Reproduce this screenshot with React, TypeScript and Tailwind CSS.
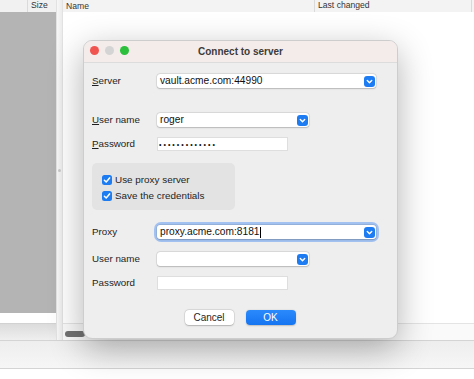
import React from "react";

const Chevron = () => (
  <span className="flex h-[11px] w-[11px] shrink-0 items-center justify-center rounded-[3px] bg-[#1d7cf2]">
    <svg width="11" height="11" viewBox="0 0 11 11" fill="none">
      <path d="M3.3 4.6 L5.5 6.8 L7.7 4.6" stroke="white" strokeWidth="1.4" strokeLinecap="round" strokeLinejoin="round" />
    </svg>
  </span>
);

const Check = () => (
  <span className="flex h-[10px] w-[10px] shrink-0 items-center justify-center rounded-[2.5px] bg-[#1d7cf2]">
    <svg width="10" height="10" viewBox="0 0 10 10" fill="none">
      <path d="M2.4 5.2 L4.2 7 L7.6 2.9" stroke="white" strokeWidth="1.5" strokeLinecap="round" strokeLinejoin="round" />
    </svg>
  </span>
);

const Combo = ({ value, width, cursor }: { value: string; width: string; cursor?: boolean }) => (
  <div
    className={`flex h-[14px] ${width} items-center justify-between rounded-[3px] bg-white pl-[3px] pr-[1px] shadow-[0_0_0_0.5px_rgba(0,0,0,0.12),0_0.5px_1.5px_rgba(0,0,0,0.18)]`}
  >
    <span className="flex items-center text-[10.2px] leading-none text-[#111]">
      {value}
      {cursor && <span className="ml-[0.5px] inline-block h-[11px] w-[1px] bg-black" />}
    </span>
    <Chevron />
  </div>
);

const Secret = ({ value }: { value: string }) => (
  <div className="flex h-[14px] w-[131px] items-center border border-[#dedede] bg-white pl-[1px]">
    <span className="text-[7px] leading-none tracking-[2px] text-[#111]">{value}</span>
  </div>
);

const Row = ({ label, children, className = "" }: { label: React.ReactNode; children: React.ReactNode; className?: string }) => (
  <div className={`flex h-[14px] items-center ${className}`}>
    <div className="w-[65px] shrink-0 text-[9.8px] leading-none text-[#1e1e1e]">{label}</div>
    {children}
  </div>
);

export default function App() {
  return (
    <div
      className="relative h-[379px] w-[474px] overflow-hidden bg-white"
      style={{ fontFamily: '"Liberation Sans", Arial, sans-serif' }}
    >
      {/* main window */}
      <div className="flex h-[340px]">
        <div className="flex w-[56px] flex-col">
          <div className="flex h-[12px] items-center bg-[#f1f1f1]">
            <div className="ml-[27px] h-full border-l border-[#dadada] pl-[3px] text-[8.6px] leading-[11px] text-[#333]">
              Size
            </div>
          </div>
          <div className="flex-1 bg-[#b4b4b4]" />
          <div className="h-[10px] bg-white" />
          <div className="h-[17px] border-t border-[#d2d2d2] bg-gradient-to-b from-[#dcdcdc] to-[#efefef]" />
        </div>
        <div className="flex w-[7px] flex-col items-center justify-center border-x border-[#e2e2e2] bg-gradient-to-r from-[#f7f7f7] to-[#ececec]">
          <div className="h-[3px] w-[3px] rounded-full bg-[#c8c8c8]" />
        </div>
        <div className="flex flex-1 flex-col">
          <div className="flex h-[12px] items-center bg-[#f3f3f3] text-[8.6px] leading-[11px] text-[#333]">
            <div className="w-[251px] pl-[3px]">Name</div>
            <div className="h-full w-[157px] border-l border-[#dadada] pl-[3px]">Last changed</div>
            <div className="h-full flex-1 border-l border-[#dadada]" />
          </div>
          <div className="flex-1 bg-white" />
          <div className="flex h-[17px] flex-col justify-end border-t border-[#e4e4e4] bg-[#fafafa] pb-[3px] pl-[2px]">
            <div className="h-[6px] w-[20px] rounded-full bg-[#727272]" />
          </div>
        </div>
      </div>
      <div className="h-[29px] border-y border-[#d4d4d4] bg-gradient-to-b from-[#eeeeee] to-[#f6f6f6]" />

      {/* dialog */}
      <div className="absolute left-[83px] top-[40px] flex h-[299px] w-[315px] flex-col overflow-hidden rounded-[9px] border border-[#cdcdcd] bg-[#eeeeee] shadow-[0_10px_34px_rgba(0,0,0,0.3)]">
        <div className="relative flex h-[22px] shrink-0 items-center justify-center border-b border-[#dcdcdc] bg-[#f4ecea]">
          <div className="absolute left-[6px] top-[5px] flex gap-[6px]">
            <span className="h-[9px] w-[9px] rounded-full bg-[#f0544f]" />
            <span className="h-[9px] w-[9px] rounded-full bg-[#d4d4d4]" />
            <span className="h-[9px] w-[9px] rounded-full bg-[#2bbf3c]" />
          </div>
          <span className="text-[10px] font-bold leading-none text-[#3b3b3b]">Connect to server</span>
        </div>

        <div className="flex flex-col pl-[8px]">
          <Row label={<><span className="underline">S</span>erver</>} className="mt-[11px]">
            <Combo value="vault.acme.com:44990" width="w-[219px]" />
          </Row>
          <Row label={<><span className="underline">U</span>ser name</>} className="mt-[25px]">
            <Combo value="roger" width="w-[152px]" />
          </Row>
          <Row label={<><span className="underline">P</span>assword</>} className="mt-[10px]">
            <Secret value="•••••••••••••" />
          </Row>

          <div className="mt-[12px] flex w-[143px] flex-col gap-[6px] rounded-[5px] bg-[#e3e3e3] pb-[9px] pl-[10px] pt-[12px] text-[9.9px] leading-none text-[#1e1e1e]">
            <div className="flex items-center gap-[3px]">
              <Check />
              <span>Use proxy server</span>
            </div>
            <div className="flex items-center gap-[3px]">
              <Check />
              <span>Save the credentials</span>
            </div>
          </div>

          <Row label="Proxy" className="mt-[15px]">
            <div className="rounded-[4px] shadow-[0_0_0_3px_#a3c2f1]">
              <Combo value="proxy.acme.com:8181" width="w-[219px]" cursor />
            </div>
          </Row>
          <Row label="User name" className="mt-[13px]">
            <Combo value="" width="w-[152px]" />
          </Row>
          <Row label="Password" className="mt-[10px]">
            <Secret value="" />
          </Row>
        </div>

        <div className="mt-[20px] flex justify-center gap-[12px] pr-[1px]">
          <button className="flex h-[15px] w-[49px] items-center justify-center rounded-[4px] bg-white text-[10px] leading-none text-[#262626] shadow-[0_0_0_0.5px_rgba(0,0,0,0.12),0_0.5px_1.5px_rgba(0,0,0,0.2)]">
            Cancel
          </button>
          <button className="flex h-[15px] w-[50px] items-center justify-center rounded-[4px] bg-gradient-to-b from-[#2a8afc] to-[#1574f0] text-[10px] leading-none text-white shadow-[0_0.5px_1.5px_rgba(0,0,0,0.2)]">
            OK
          </button>
        </div>
      </div>
    </div>
  );
}
